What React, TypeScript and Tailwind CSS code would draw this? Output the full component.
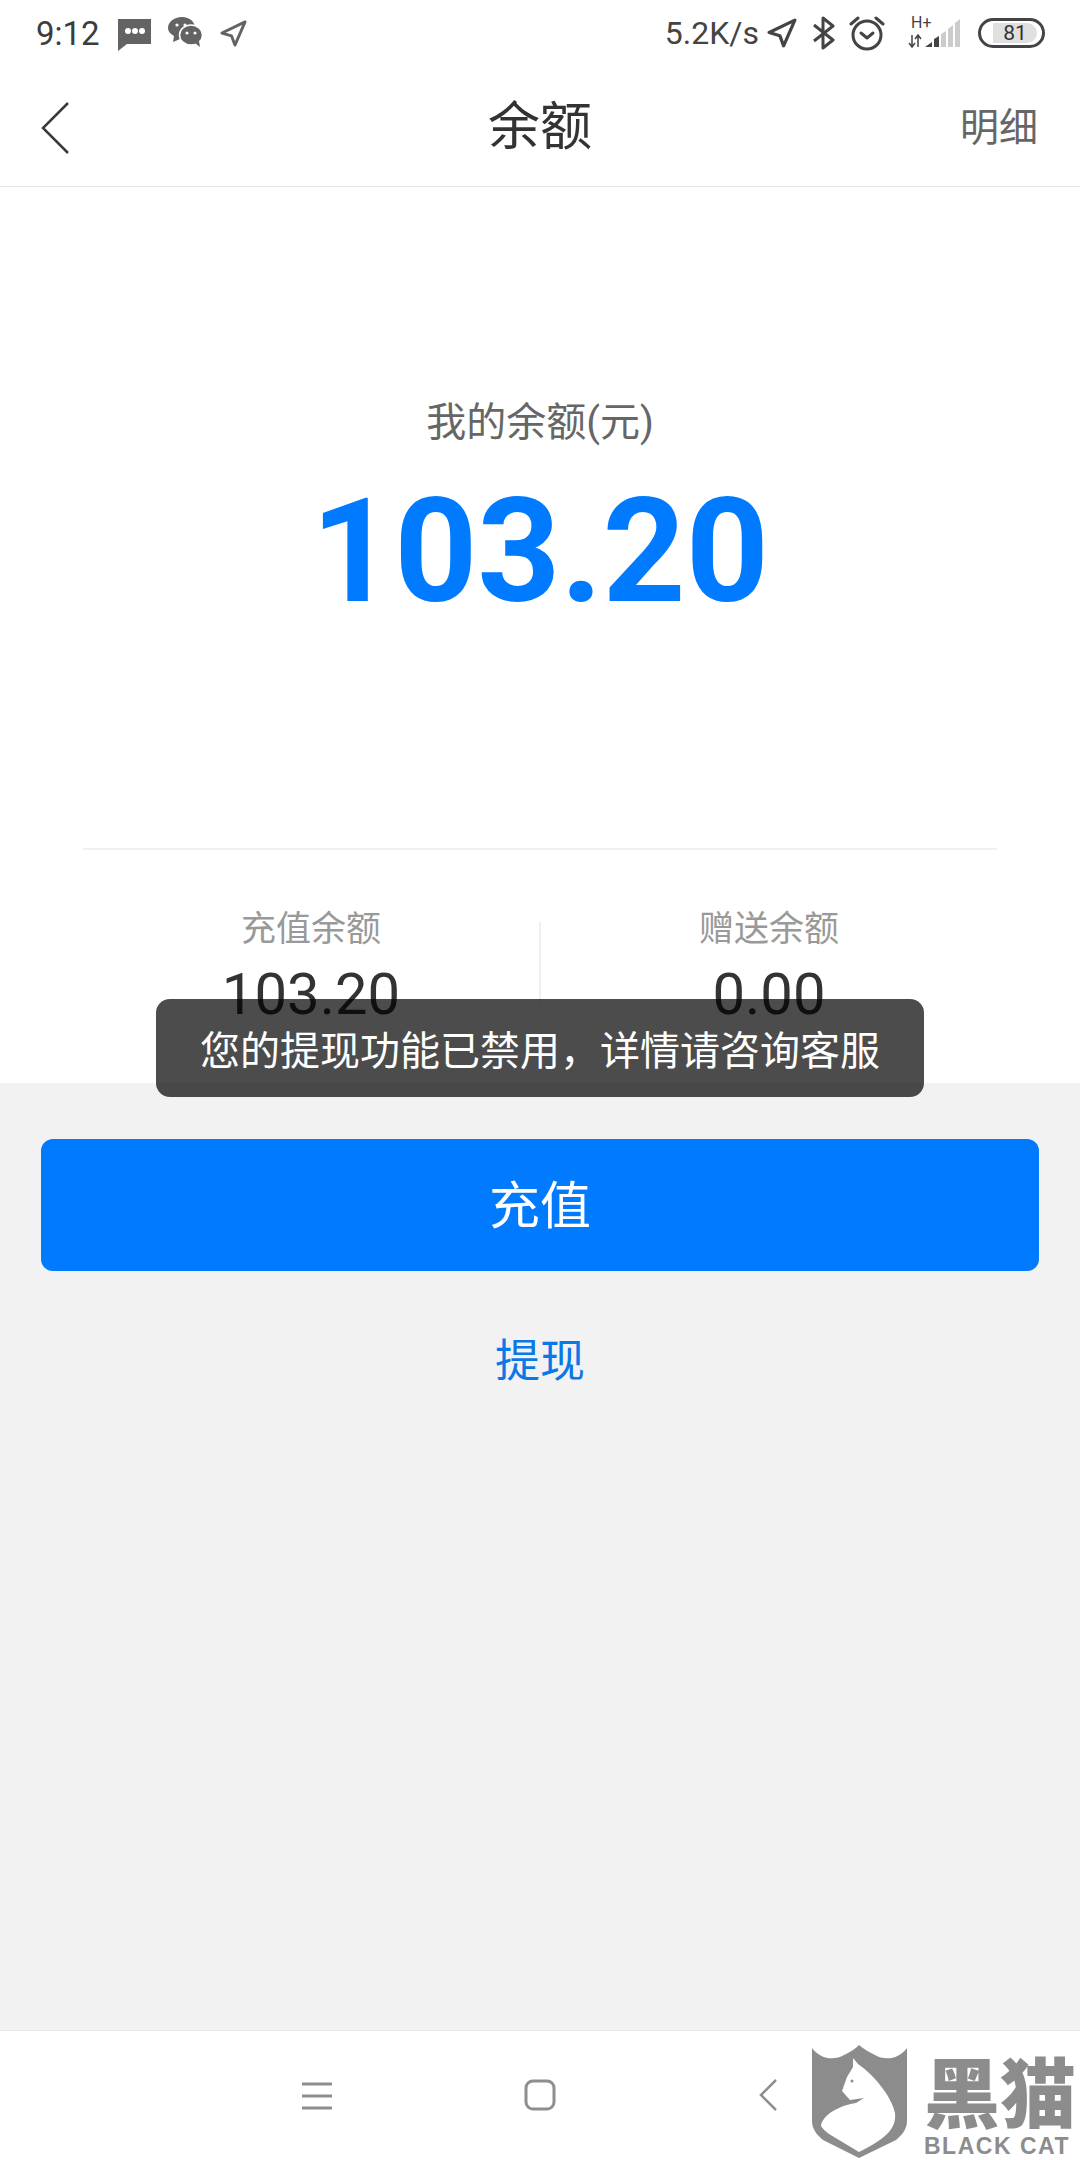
function LocationArrow({ className }: { className: string }) {
  return (
    <svg className={className} viewBox="0 0 28 28" fill="none" stroke="currentColor" strokeWidth={3} strokeLinejoin="round">
      <path d="M26 2 L2 13.5 L12 16.5 L15.5 26 Z" />
    </svg>
  );
}

function StatusBar() {
  return (
    <div className="h-[64px] flex items-center justify-between pl-[36px] pr-[35px] pt-[2px] text-[#444]">
      <div className="flex items-center">
        <span className="text-[33px] leading-none text-[#3c3c3c]">9:12</span>
        <svg className="w-[33px] h-[32px] ml-[18px] mt-[4px] text-[#636363]" viewBox="0 0 33 32" fill="currentColor">
          <path d="M0 0 H33 V25 H9 L0 32 Z" />
          <circle cx="10" cy="12" r="3" fill="#fff" />
          <circle cx="17" cy="12" r="3" fill="#fff" />
          <circle cx="24" cy="12" r="3" fill="#fff" />
        </svg>
        <svg className="w-[34px] h-[30px] ml-[17px] -mt-[2px] text-[#636363]" viewBox="0 0 34 30">
          <path d="M14 0 C22 0 27 5 27 11 C27 17 22 22 14 22 L12 22 L5 25 L6 19 C2 17 0 14 0 11 C0 5 6 0 14 0 Z" fill="currentColor" />
          <ellipse cx="23" cy="18" rx="11.5" ry="10" fill="currentColor" stroke="#fff" strokeWidth="1.5" />
          <path d="M27 26 L32 30 L31 24 Z" fill="currentColor" />
          <circle cx="9" cy="8" r="1.6" fill="#fff" />
          <circle cx="17" cy="8" r="1.6" fill="#fff" />
          <circle cx="19" cy="16" r="1.5" fill="#fff" />
          <circle cx="27" cy="16" r="1.5" fill="#fff" />
        </svg>
        <LocationArrow className="w-[27px] h-[27px] ml-[18px] text-[#636363]" />
      </div>
      <div className="flex items-center">
        <span className="text-[32px] leading-none text-[#444]">5.2K/s</span>
        <LocationArrow className="w-[30px] h-[30px] ml-[8px]" />
        <svg className="w-[22px] h-[34px] ml-[16px]" viewBox="0 0 22 34" fill="none" stroke="currentColor" strokeWidth={3} strokeLinejoin="round">
          <path d="M1 9 L20 24 L10 32 V2 L20 10 L1 25" />
        </svg>
        <svg className="w-[36px] h-[36px] ml-[14px]" viewBox="0 0 36 36" fill="none" stroke="currentColor" strokeWidth={3} strokeLinecap="round" strokeLinejoin="round">
          <circle cx="18" cy="20" r="14" />
          <path d="M12 18 L18 23 L24 18" />
          <path d="M2 9 L9 3 M34 9 L27 3" />
        </svg>
        <div className="relative w-[57px] h-[31px] ml-[23px]">
          <span className="absolute left-[3px] top-[-3px] text-[16px] leading-none text-[#444]">H+</span>
          <svg className="absolute left-0 bottom-0 w-[57px] h-[31px]" viewBox="0 0 57 31" fill="none">
            <path d="M4 17 V29 M1 25 L4 29 L7 25 M10 29 V17 M7 21 L10 17 L13 21" stroke="#444" strokeWidth="1.5" />
            <path d="M17 29 L24 24 V29 Z M26 21 L31 18 V29 H26 Z" fill="#444" />
            <path d="M33 16 L38 13 V29 H33 Z M40 11 L45 7 V29 H40 Z M47 5 L52 1 V29 H47 Z" fill="#ccc" />
          </svg>
        </div>
        <div className="w-[67px] h-[30px] ml-[13px] border-[3px] border-[#444] rounded-full flex items-center justify-start pl-[12px] pr-[4px]">
          <div className="w-[44px] h-[20px] bg-[#e0e0e0] rounded-r-full flex items-center justify-center text-[21px] leading-none text-[#333]">
            81
          </div>
        </div>
      </div>
    </div>
  );
}

function Header() {
  return (
    <div className="relative h-[123px] flex items-center justify-center border-b border-[#e4e4e4]">
      <svg className="absolute left-[41px] top-[38px] w-[28px] h-[52px] text-[#3a3a3a]" viewBox="0 0 28 52" fill="none" stroke="currentColor" strokeWidth={2.5}>
        <path d="M27 1 L2 26 L27 51" />
      </svg>
      <h1 className="text-[52px] leading-none text-[#333] mt-[6px]">余额</h1>
      <span className="absolute right-[42px] top-[45px] text-[39px] leading-none text-[#666]">明细</span>
    </div>
  );
}

function BottomNav() {
  return (
    <div className="h-[130px] bg-white border-t border-[#e8e8e8] flex items-start text-[#8e8e8e]">
      <svg className="w-[30px] h-[28px] ml-[302px] mt-[51px]" viewBox="0 0 30 28" stroke="currentColor" strokeWidth={3}>
        <path d="M0 2 H30 M0 14 H30 M0 26 H30" />
      </svg>
      <svg className="w-[32px] h-[32px] ml-[192px] mt-[48px]" viewBox="0 0 32 32" fill="none" stroke="currentColor" strokeWidth={3}>
        <rect x="2" y="2" width="28" height="28" rx="7" />
      </svg>
      <svg className="w-[20px] h-[32px] ml-[202px] mt-[48px]" viewBox="0 0 20 32" fill="none" stroke="currentColor" strokeWidth={2.5}>
        <path d="M18 1 L3 16 L18 31" />
      </svg>
    </div>
  );
}

function Watermark() {
  return (
    <div className="absolute left-[812px] top-[2045px] w-[268px] h-[115px] flex text-[#8c8c8c]">
      <svg className="w-[95px] h-[113px] shrink-0" viewBox="0 0 95 113">
        <path
          d="M0 3 C8 14 22 16 32 10 C39 7 44 3 47 0 C51 3 56 7 63 10 C73 16 87 14 95 3 V76 C95 84 90 90 84 95 L47 113 L11 95 C5 90 0 84 0 76 Z"
          fill="currentColor"
        />
        <path
          d="M41 13 L46 19 C62 30 80 52 83 68 C85 84 72 95 47 107 L17 89 C12 85 9 82 9 80 C12 68 30 60 44 58 L52 53 L38 55 L30 46 L35 32 L41 22 Z"
          fill="#fff"
        />
        <circle cx="40" cy="36" r="1.5" fill="currentColor" />
      </svg>
      <div className="ml-[17px] flex flex-col font-['Liberation_Sans','Noto_Sans_CJK_SC',sans-serif]">
        <span className="text-[76px] leading-[76px] font-black mt-[6px] whitespace-nowrap font-['Noto_Sans_CJK_SC',sans-serif]">黑猫</span>
        <span className="text-[23px] leading-none font-bold tracking-[1.5px] mt-[8px] whitespace-nowrap">BLACK CAT</span>
      </div>
    </div>
  );
}

export default function App() {
  return (
    <div className="relative w-[1080px] h-[2160px] flex flex-col bg-white overflow-hidden font-['Roboto','Noto_Sans_CJK_SC',sans-serif]">
      <StatusBar />
      <Header />

      <div className="h-[896px] flex flex-col items-center">
        <p className="mt-[216px] text-[40px] leading-none text-[#666]">我的余额(元)</p>
        <p className="mt-[36px] text-[145px] leading-none font-bold text-[#007aff]">103.20</p>
        <div className="mt-[224px] w-[914px] border-t-2 border-[#f0f0f0]" />
        <div className="flex w-[914px] mt-[62px]">
          <div className="flex-1 flex flex-col items-center">
            <span className="text-[35px] leading-none text-[#999]">充值余额</span>
            <span className="mt-[18px] text-[58px] leading-none text-[#333]">103.20</span>
          </div>
          <div className="w-[2px] h-[84px] mt-[10px] bg-[#f0f0f0]" />
          <div className="flex-1 flex flex-col items-center">
            <span className="text-[35px] leading-none text-[#999]">赠送余额</span>
            <span className="mt-[18px] text-[58px] leading-none text-[#333]">0.00</span>
          </div>
        </div>
      </div>

      <div className="flex-1 bg-[#f2f2f2] flex flex-col items-center px-[41px]">
        <button className="mt-[56px] w-full h-[132px] rounded-[12px] bg-[#007aff] text-white text-[51px] leading-none pt-[2px]">
          充值
        </button>
        <span className="mt-[68px] text-[45px] leading-none text-[#0a78e6]">提现</span>
      </div>

      <BottomNav />

      <div className="absolute left-[156px] top-[999px] w-[768px] h-[98px] rounded-[14px] bg-black/70 flex items-center justify-center pt-[7px] text-white text-[40px] leading-none whitespace-nowrap">
        您的提现功能已禁用，详情请咨询客服
      </div>

      <Watermark />
    </div>
  );
}
